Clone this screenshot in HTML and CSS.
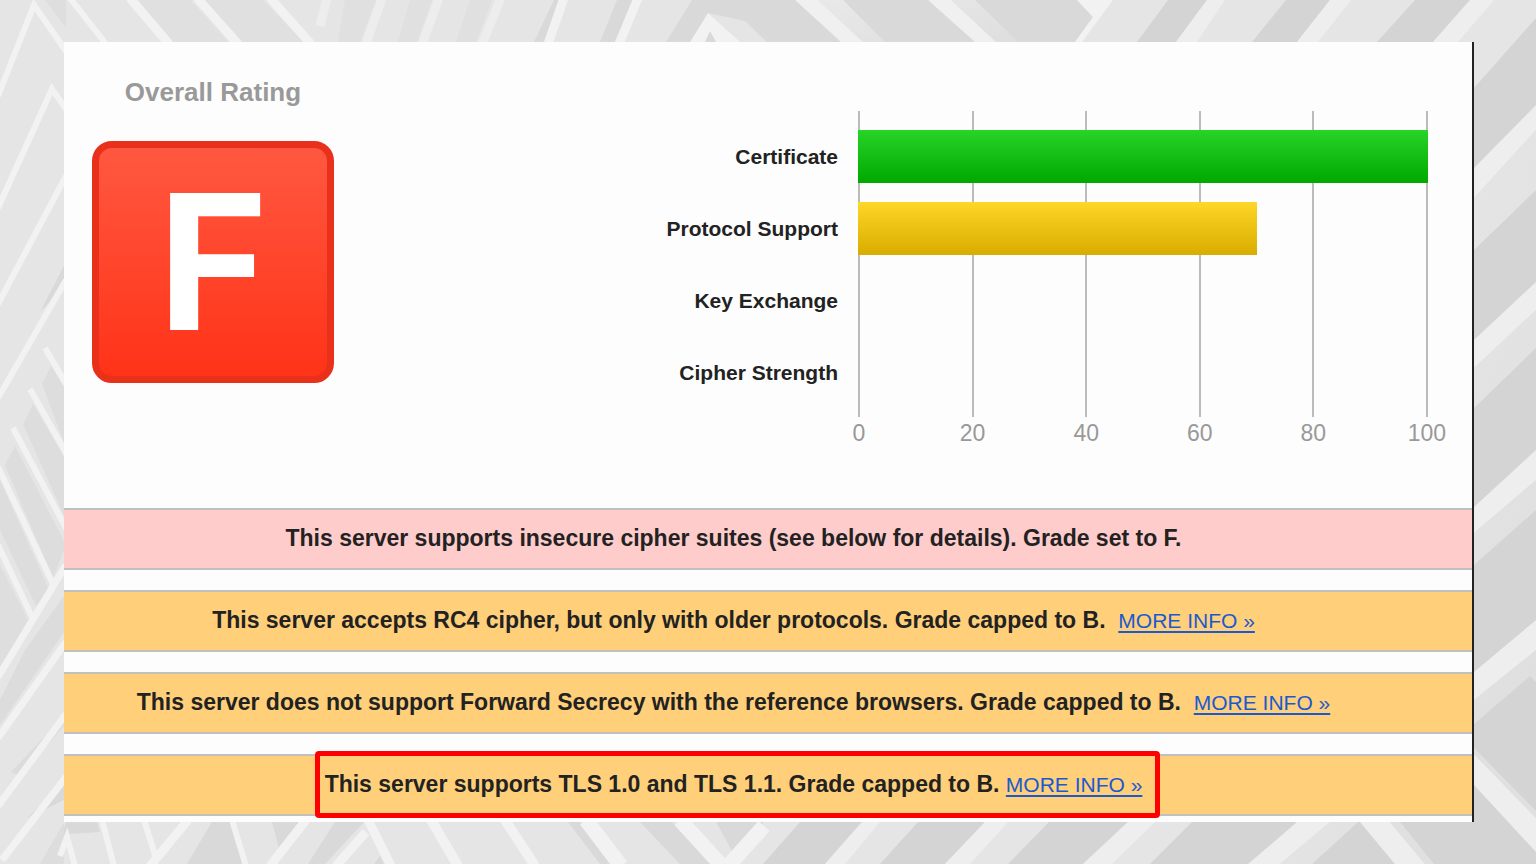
FILE: index.html
```html
<!DOCTYPE html>
<html lang="en">
<head>
<meta charset="utf-8">
<title>Overall Rating</title>
<link rel="stylesheet" href="styles.css">
</head>
<body>
<svg class="backdrop" viewBox="0 0 1536 864" preserveAspectRatio="xMidYMid slice" aria-hidden="true">
  <defs>
    <linearGradient id="face" x1="0" y1="0" x2="1" y2="1">
      <stop offset="0" stop-color="#e9e9e9"/>
      <stop offset="1" stop-color="#dedede"/>
    </linearGradient>
  </defs>
  <rect width="1536" height="864" fill="#e5e5e5"/>
  <g fill="#d9d9d9">
    <path d="M45 0L66 0L66 28Z" fill="#dedede"/>
    <path d="M66 262L40 312L66 284Z"/>
    <path d="M136 0H190L228 42H172Z" fill="#e0e0e0"/>
    <path d="M203 0H262L304 42H243Z" fill="#e0e0e0"/>
    <path d="M345 0H376L360 42H338Z" fill="#e0e0e0"/>
    <path d="M410 0H432L417 42H398Z" fill="#e0e0e0"/>
    <path d="M470 0H492L476 42H456Z" fill="#e0e0e0"/>
    <path d="M554 0H562L545 42H534Z"/>
    <path d="M617 0H634L615 42H600Z"/>
    <path d="M692 0H1077L1093 17L1075 42H666Z"/>
    <path d="M51 366L66 390V448L42 384Z" fill="#dddddd"/>
    <path d="M33 404L66 460V520L23 424Z" fill="#dddddd"/>
    <path d="M15 446L66 545L53 578L5 465Z" fill="#dddddd"/>
    <path d="M0 480L50 592L36 606L0 530Z" fill="#dddddd"/>
    <path d="M0 565L28 620L0 670Z" fill="#dedede"/>
    <path d="M64 596L25 650L0 700V725L64 632Z" fill="#dcdcdc"/>
    <path d="M64 716L11 772L20 776L64 726Z" fill="#dcdcdc"/>
    <path d="M64 780L28 818L64 800Z"/>
    <path d="M66 822H97L100 832L68 834L60 845Z"/>
    <path d="M64 822L40 864H64Z" fill="#dddddd"/>
    <path d="M212 822H230L243 864H187Z"/>
    <path d="M272 822H300L280 852Z"/>
    <path d="M335 822H364L325 864H308Z"/>
    <path d="M568 822H580L612 864H600Z"/>
    <path d="M640 822H672L712 864H680Z"/>
    <path d="M716 822H764L736 858Z"/>
    <path d="M380 856L384 864H374Z"/>
  </g>
  <g fill="none" stroke="#f2f2f2" stroke-width="6">
    <path d="M-2 96L34 5L68 54M-2 208L52 89L68 112"/>
    <path d="M66 176L-2 304M66 280L-2 398"/>
    <path d="M70 -2L106 44M45 348L66 384M30 389L67 455M13 428L67 530M-2 467L54 586M-2 545L32 617"/>
    <path d="M102 820L114 866M144 820L156 858M232 820L246 866M60 856L67 837L75 866"/>
    <path d="M66 565L-2 677M66 642L-2 738M66 714L-2 806M66 777L2 860" stroke-width="7"/>
    <path d="M130 -2L169 44M197 -2L238 44M270 -2L311 44M188 820L150 866" stroke-width="9"/>
    <path d="M327 -2L320 26M382 -2L366 44M439 -2L422 44M501 -2L482 44" stroke="#ededed" stroke-width="9"/>
    <path d="M564 -2L548 44M638 -2L619 44M306 820L270 866M368 820L391 866M366 832L336 866" stroke-width="9"/>
    <path d="M431 820L458 866M505 820L535 866" stroke-width="10"/>
    <path d="M586 820L621 866M680 820L722 866M764 826L728 866" stroke-width="15"/>
  </g>
  <path d="M708 13L745 21L767 42H738Z" fill="#e5e5e5"/>
  <path d="M708 13L740 42H716L710 31L705 42H690Z" fill="#f2f2f2"/>
  <path d="M1077 0H1113L1082 42H1075L1093 17Z" fill="#f2f2f2"/>
  <path fill="url(#face)" d="M818 0H843L885 42H863ZM951 0H975L1018 42H996Z"/>
  <path fill="#f0f0f0" d="M795 0H818L863 42H841ZM928 0H951L996 42H975Z"/>
  <path fill="#d4d4d4" d="M1168 0H1207L1176 42H1137ZM1286 0H1330L1297 42H1252ZM1415 0H1470L1433 42H1377ZM1536 18V864H1150L1192 822H1474V88ZM800 822H862L825 864H763ZM918 822H985L945 864H880ZM1049 822H1128L1083 864H1008Z"/>
  <path fill="url(#face)" d="M1536 130V190L1474 250V198ZM1536 310V348L1474 408V368ZM1536 480V510L1474 565V533ZM1536 650V680L1530 676L1474 724V700ZM1330 822H1358L1312 864H1280Z"/>
  <path fill="#eeeeee" d="M1207 0H1225L1197 42H1176ZM1330 0H1351L1318 42H1297ZM1470 0H1494L1458 42H1433ZM1536 105V130L1474 198V168ZM1536 282V310L1474 368V340ZM1536 450V480L1474 533V507ZM1536 620V650L1474 700V672ZM1474 754L1536 818V852L1474 785ZM1297 822H1330L1280 864H1248ZM1360 822H1390L1425 864H1395ZM862 822H880L845 864H825ZM985 822H1008L970 864H945ZM1128 822H1155L1112 864H1083Z"/>
  <path fill="#e0e0e0" d="M1474 748L1536 811V818L1474 754ZM1390 822H1400L1434 864H1425ZM1530 676L1536 682V676Z"/>
</svg>

<main class="report">
  <section class="summary">
    <div class="rating">
      <h1 class="rating-title">Overall Rating</h1>
      <div class="grade">F</div>
    </div>
    <div class="chart">
      <div class="labels">
        <div class="label">Certificate</div>
        <div class="label">Protocol Support</div>
        <div class="label">Key Exchange</div>
        <div class="label">Cipher Strength</div>
      </div>
      <div class="plot">
        <div class="bars">
          <div class="row"><div class="bar bar-green" style="width:100%"></div></div>
          <div class="row"><div class="bar bar-yellow" style="width:70%"></div></div>
          <div class="row"></div>
          <div class="row"></div>
        </div>
        <div class="axis">
          <span>0</span><span>20</span><span>40</span><span>60</span><span>80</span><span>100</span>
        </div>
      </div>
    </div>
  </section>
  <section class="alerts">
    <p class="alert alert-error"><span>This server supports insecure cipher suites (see below for details). Grade set to F.</span></p>
    <p class="alert"><span>This server accepts RC4 cipher, but only with older protocols. Grade capped to B.&nbsp; <a href="#rc4">MORE INFO »</a></span></p>
    <p class="alert"><span>This server does not support Forward Secrecy with the reference browsers. Grade capped to B.&nbsp; <a href="#fs">MORE INFO »</a></span></p>
    <p class="alert"><span class="marked">This server supports TLS 1.0 and TLS 1.1. Grade capped to B. <a href="#tls">MORE INFO »</a></span></p>
  </section>
</main>
</body>
</html>
```

FILE: styles.css
```css
* { box-sizing: border-box; }

body {
  margin: 0;
  padding: 42px 62px 42px 64px;
  background: #e5e5e5;
  color: #222;
  font-family: "Liberation Sans", Arial, sans-serif;
}

.backdrop {
  position: fixed;
  inset: 0;
  z-index: -1;
  width: 100%;
  height: 100%;
}

.report {
  padding-bottom: 6px;
  background: #fdfdfd;
  border-right: 2px solid #222;
}

.summary {
  display: flex;
  justify-content: space-between;
  min-height: 466px;
  padding: 36px 44px 0 28px;
}

.rating { width: 242px; }

.rating-title {
  margin: 0 0 35px;
  color: #999;
  font-size: 26px;
  line-height: 28px;
  text-align: center;
}

.grade {
  display: flex;
  align-items: center;
  justify-content: center;
  height: 242px;
  border: 7px solid #e8301a;
  border-radius: 20px;
  background: linear-gradient(#ff5840, #ff3318);
  color: #fff;
  font-family: Inter, "Liberation Sans", sans-serif;
  font-size: 188px;
  font-weight: bold;
  line-height: 228px;
}

.chart {
  display: flex;
  flex: 0 1 800px;
  gap: 20px;
  padding-top: 33px;
}

.labels {
  flex: 1;
  padding-top: 10px;
}

.label {
  font-size: 21px;
  font-weight: bold;
  line-height: 72px;
  text-align: right;
  white-space: nowrap;
}

.plot { flex: 0 1 570px; }

.bars {
  padding: 9px 0;
  background: repeating-linear-gradient(90deg, #bbb 0 2px, transparent 2px calc((100% - 2px) / 5));
}

.row {
  display: flex;
  align-items: center;
  height: 72px;
}

.bar { height: 53px; }
.bar-green { background: linear-gradient(#28d428, #00a800); }
.bar-yellow { background: linear-gradient(#ffd728, #d8ac00); }

.axis {
  display: flex;
  justify-content: space-between;
  margin: 0 -20px;
  color: #999;
  font-size: 23px;
  line-height: 32px;
}

.axis span {
  width: 42px;
  text-align: center;
}

.alerts {
  display: grid;
  gap: 20px;
}

.alert {
  margin: 0;
  padding: 0 69px 2px 0;
  border: solid #c0c0c0;
  border-width: 2px 0;
  background: #ffcf7a;
  font-size: 23px;
  font-weight: bold;
  line-height: 56px;
  text-align: center;
}

.alert-error { background: #ffcccc; }

.alert a {
  color: #1a5ad0;
  font-size: 21px;
  font-weight: normal;
  line-height: 24px;
  text-underline-offset: 3px;
}

.marked { position: relative; }

.marked::after {
  content: "";
  position: absolute;
  inset: -20px -18px -21px -10px;
  border: 5px solid #f00;
  border-radius: 4px;
  pointer-events: none;
}
```
